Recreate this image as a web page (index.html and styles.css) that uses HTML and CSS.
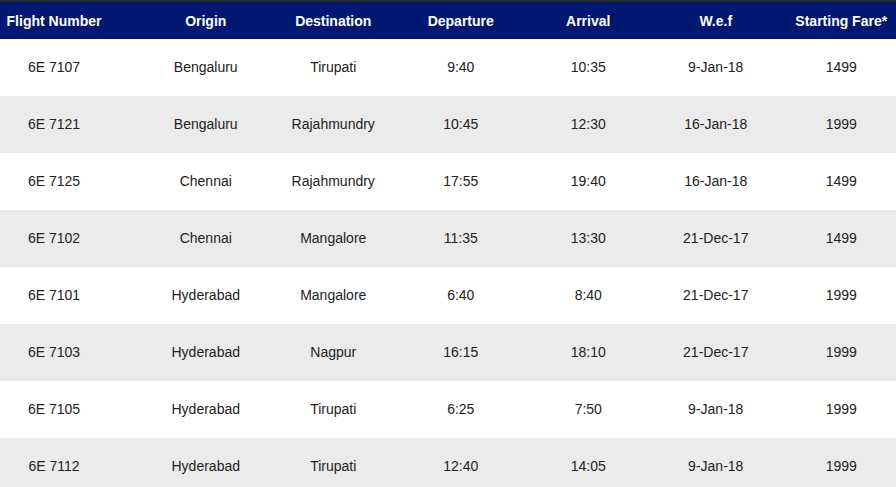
FILE: index.html
```html
<!DOCTYPE html>
<html>
<head>
<meta charset="utf-8">
<link rel="stylesheet" href="styles.css">
</head>
<body>
<div class="flights">
  <div class="row head">
    <div class="cell first">Flight Number</div>
    <div class="cell">Origin</div>
    <div class="cell">Destination</div>
    <div class="cell">Departure</div>
    <div class="cell">Arrival</div>
    <div class="cell">W.e.f</div>
    <div class="cell last">Starting Fare*</div>
  </div>
  <div class="row">
    <div class="cell first">6E 7107</div><div class="cell">Bengaluru</div><div class="cell">Tirupati</div><div class="cell">9:40</div><div class="cell">10:35</div><div class="cell">9-Jan-18</div><div class="cell last">1499</div>
  </div>
  <div class="row alt">
    <div class="cell first">6E 7121</div><div class="cell">Bengaluru</div><div class="cell">Rajahmundry</div><div class="cell">10:45</div><div class="cell">12:30</div><div class="cell">16-Jan-18</div><div class="cell last">1999</div>
  </div>
  <div class="row">
    <div class="cell first">6E 7125</div><div class="cell">Chennai</div><div class="cell">Rajahmundry</div><div class="cell">17:55</div><div class="cell">19:40</div><div class="cell">16-Jan-18</div><div class="cell last">1499</div>
  </div>
  <div class="row alt">
    <div class="cell first">6E 7102</div><div class="cell">Chennai</div><div class="cell">Mangalore</div><div class="cell">11:35</div><div class="cell">13:30</div><div class="cell">21-Dec-17</div><div class="cell last">1499</div>
  </div>
  <div class="row">
    <div class="cell first">6E 7101</div><div class="cell">Hyderabad</div><div class="cell">Mangalore</div><div class="cell">6:40</div><div class="cell">8:40</div><div class="cell">21-Dec-17</div><div class="cell last">1999</div>
  </div>
  <div class="row alt">
    <div class="cell first">6E 7103</div><div class="cell">Hyderabad</div><div class="cell">Nagpur</div><div class="cell">16:15</div><div class="cell">18:10</div><div class="cell">21-Dec-17</div><div class="cell last">1999</div>
  </div>
  <div class="row">
    <div class="cell first">6E 7105</div><div class="cell">Hyderabad</div><div class="cell">Tirupati</div><div class="cell">6:25</div><div class="cell">7:50</div><div class="cell">9-Jan-18</div><div class="cell last">1999</div>
  </div>
  <div class="row alt">
    <div class="cell first">6E 7112</div><div class="cell">Hyderabad</div><div class="cell">Tirupati</div><div class="cell">12:40</div><div class="cell">14:05</div><div class="cell">9-Jan-18</div><div class="cell last">1999</div>
  </div>
</div>
</body>
</html>
```

FILE: styles.css
```css
html, body {
  margin: 0;
  padding: 0;
  background: #ffffff;
}
body {
  font-family: "Liberation Sans", Arial, sans-serif;
  color: #222222;
  overflow: hidden;
}
.flights {
  border-top: 2px solid #2b2b2b;
  width: 896px;
}
.row {
  display: grid;
  grid-template-columns: 142px repeat(5, 127.5px) 1fr;
  height: 57px;
  box-sizing: border-box;
  padding-bottom: 2px;
  align-items: center;
  font-size: 14px;
  line-height: 16px;
  background: #ffffff;
}
.row.alt {
  background: #ebebeb;
}
.row.head {
  height: 37px;
  padding-top: 1px;
  padding-bottom: 0;
  background: #011872;
  color: #ffffff;
  font-weight: bold;
  font-size: 14px;
}
.cell {
  text-align: center;
  white-space: nowrap;
}
.cell.first {
  padding-right: 34px;
}
.cell.last {
  padding-left: 7px;
}
```
